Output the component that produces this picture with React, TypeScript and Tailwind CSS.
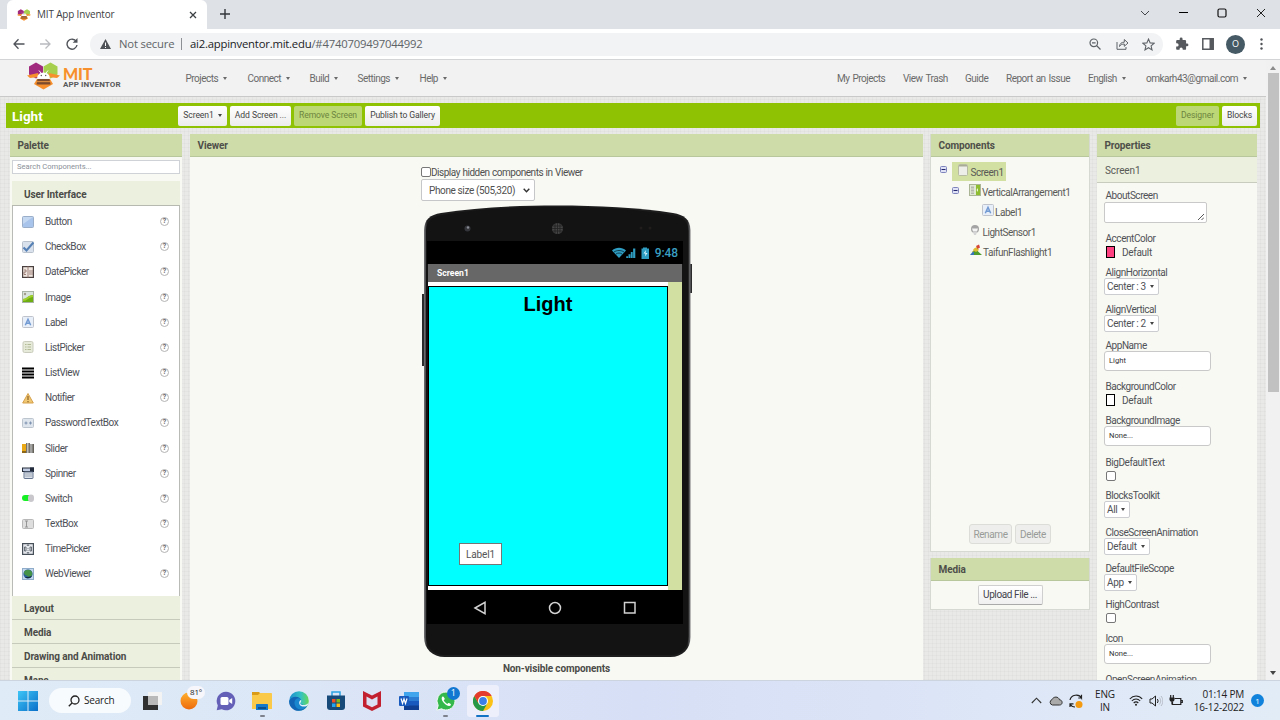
import type { ReactNode } from "react";
import clsx from "clsx";

const palette = [
  "Button",
  "CheckBox",
  "DatePicker",
  "Image",
  "Label",
  "ListPicker",
  "ListView",
  "Notifier",
  "PasswordTextBox",
  "Slider",
  "Spinner",
  "Switch",
  "TextBox",
  "TimePicker",
  "WebViewer",
];

const drawers = ["Layout", "Media", "Drawing and Animation", "Maps"];

const leftMenu = [
  { label: "Projects", width: "w-[62px]" },
  { label: "Connect", width: "w-[62px]" },
  { label: "Build", width: "w-12" },
  { label: "Settings", width: "w-[62px]" },
  { label: "Help", width: "w-12" },
];

const rightMenu = [
  { label: "My Projects", width: "w-[66px]" },
  { label: "View Trash", width: "w-[62px]" },
  { label: "Guide", width: "w-[41px]" },
  { label: "Report an Issue", width: "w-[82px]" },
  { label: "English", width: "w-[58px]", menu: true },
  { label: "omkarh43@gmail.com", width: "w-[120px]", menu: true },
];

type Property = {
  name: string;
  kind: "area" | "color" | "select" | "input" | "check";
  value?: string;
  height: string;
  swatch?: string;
};

const properties: Property[] = [
  { name: "AboutScreen", kind: "area", height: "h-[43px]" },
  { name: "AccentColor", kind: "color", value: "Default", swatch: "bg-[#ff4081]", height: "h-[34px]" },
  { name: "AlignHorizontal", kind: "select", value: "Center : 3", height: "h-[36.5px]" },
  { name: "AlignVertical", kind: "select", value: "Center : 2", height: "h-[36.5px]" },
  { name: "AppName", kind: "input", value: "Light", height: "h-[41px]" },
  { name: "BackgroundColor", kind: "color", value: "Default", swatch: "bg-white", height: "h-[34px]" },
  { name: "BackgroundImage", kind: "input", value: "None...", height: "h-[42px]" },
  { name: "BigDefaultText", kind: "check", height: "h-[33px]" },
  { name: "BlocksToolkit", kind: "select", value: "All", height: "h-[36.5px]" },
  { name: "CloseScreenAnimation", kind: "select", value: "Default", height: "h-9" },
  { name: "DefaultFileScope", kind: "select", value: "App", height: "h-9" },
  { name: "HighContrast", kind: "check", height: "h-[34px]" },
  { name: "Icon", kind: "input", value: "None...", height: "h-[41px]" },
  { name: "OpenScreenAnimation", kind: "select", height: "h-9" },
];

function Caret({ className }: { className?: string }) {
  return (
    <svg viewBox="0 0 4 3" className={clsx("h-[3px] w-1 shrink-0", className)}>
      <path d="M0 0h4L2 3z" fill="currentColor" />
    </svg>
  );
}

function BeeLogo({ className }: { className?: string }) {
  return (
    <svg viewBox="0 0 33 28" className={className}>
      <path d="M2 4.500 9 .5l7 4v8l-7 4-7-4z" fill="#a0287d" />
      <path d="M16.500 4.500 23.500.5l7 4v8l-7 4-7-4z" fill="#a5cf4c" />
      <path d="M0 13.500 11 11l1 4-9 1zM33 13.500 22 11l-1 4 9 1z" fill="#f7902c" />
      <path d="M10 17h13l3 5-9.500 5.500L7 22z" fill="#f7902c" />
      <path d="M10.500 17h12l1 5.500h-14z" fill="#7c4a2d" />
      <path d="M10 19h13v1.200H10z" fill="#d98a3c" />
      <path d="M10.500 16.500c-1-3 2-6 6-6s7 3 6 6z" fill="#fff" />
      <path d="m14 11-2-2.500M19 11l2-2.500" stroke="#fff" strokeWidth="1" />
      <circle cx="14.300" cy="13.500" r=".7" fill="#555" />
      <circle cx="18.700" cy="13.500" r=".7" fill="#555" />
    </svg>
  );
}

function ComponentIcon({ name }: { name: string }) {
  const shapes: Record<string, ReactNode> = {
    Button: (
      <>
        <rect x=".5" y=".5" width="11" height="11" rx="1" fill="#a9c4ea" stroke="#9aaec9" />
        <path d="M1 1h10L1 8z" fill="#c5d8f2" />
      </>
    ),
    CheckBox: (
      <>
        <rect x=".5" y=".5" width="11" height="11" rx="1" fill="#d9e1ec" stroke="#b8c1cc" />
        <path d="m1.500 6.500 3 3 7-8" stroke="#5580b5" strokeWidth="2.200" fill="none" />
      </>
    ),
    DatePicker: (
      <>
        <rect x=".6" y=".6" width="10.800" height="10.800" fill="#f1e6df" stroke="#4a4040" strokeWidth="1.200" />
        <path d="M2 4h2v2H2v2.500h2M6 0v12M8 4v5M10 4v5" stroke="#8a6b62" strokeWidth=".8" fill="none" />
      </>
    ),
    Image: (
      <>
        <rect x=".5" y=".5" width="11" height="11" fill="#dbe5df" stroke="#a9b3a6" />
        <path d="M1 8c4 0 5-4 10-4v7H1z" fill="#6fae10" />
        <path d="M1 8c4 0 5-4 10-4v2C7 6 5 10 1 10z" fill="#9fd02c" />
        <circle cx="3" cy="3" r="1.200" fill="#a39d8b" />
      </>
    ),
    Label: (
      <>
        <rect x=".5" y=".5" width="11" height="11" rx="1" fill="#e9eff8" stroke="#bfc4cc" />
        <path d="m3.300 9.300 2.700-6 2.700 6M4.300 7.200h3.400" stroke="#7199d2" strokeWidth="1.500" fill="none" />
      </>
    ),
    ListPicker: (
      <>
        <rect x="1" y=".5" width="10" height="11" rx="1.500" fill="#e6ead9" stroke="#c9ccbc" />
        <path d="M3 3.500h1.500M3 6h1.500M3 8.500h1.500M5.500 3.500H9M5.500 6H9M5.500 8.500H9" stroke="#adb58e" strokeWidth=".9" />
      </>
    ),
    ListView: <path d="M0 1.500h12M0 4.500h12M0 7.500h12M0 10.500h12" stroke="#000" strokeWidth="1.900" />,
    Notifier: (
      <>
        <path d="M6 1.500 11.300 11H.7z" fill="#f0c773" stroke="#d6a04b" />
        <path d="M6 4v4M6 9v1.300" stroke="#946b2c" strokeWidth="1.300" />
      </>
    ),
    PasswordTextBox: (
      <>
        <rect x=".5" y="1.500" width="11" height="9" rx="1" fill="#dfe5ec" stroke="#bcc4cd" />
        <path d="M2.500 6h3M7 6h3M4 4.500v3M8.500 4.500v3" stroke="#7d92b1" />
      </>
    ),
    Slider: (
      <>
        <path d="M0 2h4v9H0z" fill="#e9a916" />
        <path d="M0 9h4v2H0z" fill="#8d6819" />
        <path d="M4 1h4v10H4z" fill="#77736c" />
        <path d="M5 1h1.500v10H5z" fill="#c1beb7" />
        <path d="M8 2h4v9H8z" fill="#a2a2a0" />
        <path d="M10.500 2H12v9h-1.500z" fill="#65625c" />
      </>
    ),
    Spinner: (
      <>
        <rect x=".5" y="1" width="11" height="3.500" fill="#bfcbe0" stroke="#252d3b" />
        <path d="M8 .5h4V5H8z" fill="#222b3b" />
        <rect x="2" y="5" width="9" height="6.500" rx=".5" fill="#dae1e9" stroke="#65758f" />
        <path d="M3 7h7M3 9h7" stroke="#8b97a8" strokeWidth=".7" />
      </>
    ),
    Switch: (
      <>
        <rect x="0" y="3" width="11" height="6" rx="3" fill="#15ef24" />
        <rect x="6" y="2.500" width="6" height="7.500" rx="3" fill="#c9c7cb" />
      </>
    ),
    TextBox: (
      <>
        <rect x=".5" y="1.500" width="11" height="9" rx="1" fill="#dedede" stroke="#b8b8b8" />
        <path d="M3 3h3M3 9h3M4.500 3v6" stroke="#8d8d8d" strokeWidth=".9" />
      </>
    ),
    TimePicker: (
      <>
        <rect x=".6" y=".6" width="10.800" height="10.800" fill="#e5e8ed" stroke="#474f59" strokeWidth="1.200" />
        <path d="M2.500 4h1.500v4H2.500zM5 3l1-1.500L7 3M5 9l1 1.500L7 9M8 4h1.500v4H8zM6 5v.8M6 7v.8" stroke="#4b535c" strokeWidth=".8" fill="none" />
      </>
    ),
    WebViewer: (
      <>
        <rect x=".5" y=".5" width="11" height="11" fill="#c5d7ee" stroke="#8facca" />
        <circle cx="6" cy="6" r="4.600" fill="#285f96" />
        <path d="M2 4c2-3 6-3 8 0 1 3-1 5-3 5-2-2-5-1-5-5z" fill="#459348" />
        <path d="M3 9c2 2 5 1.500 7-1-3 1-5 1-7 1z" fill="#15293f" />
      </>
    ),
  };

  return (
    <svg viewBox="0 0 12 12" className="h-3 w-3 shrink-0">
      {shapes[name]}
    </svg>
  );
}

function PanelTitle({ children }: { children: ReactNode }) {
  return (
    <div className="flex h-[23px] shrink-0 items-center border-b border-[#b9c79d] bg-[#cddca9] pl-[7.500px] pt-px text-[10px] font-bold tracking-[-0.1px] text-[#4f4f4a]">
      {children}
    </div>
  );
}

function BrowserChrome() {
  return (
    <div className="h-[60px] shrink-0 border-b border-[#d3d4d6] bg-white font-['Open_Sans',sans-serif] text-[#3c4043]">
      <div className="flex h-[29px] bg-[#dee1e6] pl-[7px]">
        <div className="flex w-[200px] items-center rounded-t-[6px] bg-white pl-2.5">
          <BeeLogo className="h-3.5 w-3.5" />
          <span className="ml-1.5 text-[9.900px] tracking-[-0.12px]">MIT App Inventor</span>
          <svg viewBox="0 0 8 8" className="ml-auto mr-2.5 h-2 w-2" stroke="#3c4043" strokeWidth="1.300">
            <path d="m1 1 6 6M7 1 1 7" />
          </svg>
        </div>
        <svg viewBox="0 0 10 10" className="ml-[13px] mt-[9px] h-2.5 w-2.5" stroke="#33363a" strokeWidth="1.400">
          <path d="M5 0v10M0 5h10" />
        </svg>
        <div className="ml-auto mr-[14px] flex items-center pb-1">
          <svg viewBox="0 0 10 6" className="mr-[29px] h-1.5 w-2.5" fill="none" stroke="#44474b">
            <path d="m1 1 4 4 4-4" />
          </svg>
          <span className="mr-[29px] h-px w-[9px] bg-black" />
          <svg viewBox="0 0 10 10" className="mr-[29px] h-2.5 w-2.5" fill="none" stroke="#111" strokeWidth="1.200">
            <rect x="1" y="1" width="8" height="8" rx="1.500" />
          </svg>
          <svg viewBox="0 0 10 10" className="h-2.5 w-2.5" stroke="#222">
            <path d="m1 1 8 8M9 1 1 9" />
          </svg>
        </div>
      </div>
      <div className="flex h-[30px] items-center pl-[13px]">
        <svg viewBox="0 0 12 12" className="h-3 w-3" fill="none" stroke="#50545a" strokeWidth="1.300">
          <path d="M11.500 6H1M5.500 1.200 1 6l4.500 4.800" />
        </svg>
        <svg viewBox="0 0 12 12" className="ml-[14px] h-3 w-3" fill="none" stroke="#b9bbbe" strokeWidth="1.300">
          <path d="M1 6h10M6.500 1.500 11 6l-4.500 4.500" />
        </svg>
        <svg viewBox="0 0 12 12" className="ml-[15px] h-3 w-3" fill="none" stroke="#50545a" strokeWidth="1.400">
          <path d="M10.300 3.500A5 5 0 1 0 11 7" />
          <path d="M11.500 0v4.800H6.700z" fill="#50545a" stroke="none" />
        </svg>
        <div className="ml-3 flex h-[23px] w-[1073px] items-center rounded-full bg-[#f1f3f4] pl-2.5 text-[11.300px]">
          <svg viewBox="0 0 11 10" className="h-2.5 w-[11px]">
            <path d="M5.500 0 11 10H0z" fill="#505357" />
            <path d="M5.500 3.500V7M5.500 8v1" stroke="#fff" />
          </svg>
          <span className="ml-2 w-[55px] whitespace-nowrap tracking-[-0.2px] text-[#5f6368]">Not secure</span>
          <span className="ml-[7px] h-3 w-px bg-[#8d9095]" />
          <span className="ml-2 whitespace-nowrap tracking-[-0.21px] text-[#5f6368]">
            <span className="text-[#202124]">ai2.appinventor.mit.edu</span>/#4740709497044992
          </span>
          <svg viewBox="0 0 12 12" className="ml-auto h-3 w-3" fill="none" stroke="#5f6368" strokeWidth="1.200">
            <circle cx="4.800" cy="4.800" r="3.800" />
            <path d="m7.500 7.500 4 4M3 4.800h3.600" />
          </svg>
          <svg viewBox="0 0 13 12" className="ml-[15px] h-3 w-[13px]" fill="none" stroke="#5f6368">
            <path d="M1 4v7.300h9V9M3.500 8.500c.3-3 2-4.300 4.800-4.300V1.500L12 5 8.300 8.300V6c-2 0-3.500.5-4.800 2.500z" />
          </svg>
          <svg viewBox="0 0 24 24" className="ml-[13px] mr-2 h-[13px] w-[13px]" fill="none" stroke="#5f6368" strokeWidth="2">
            <path d="m12 2 3 7 7.500.6-5.700 5 1.700 7.400-6.500-4-6.500 4 1.700-7.400-5.700-5L9 9z" />
          </svg>
        </div>
        <svg viewBox="0 0 24 24" className="ml-3 h-3.5 w-3.5" fill="#56595e">
          <path d="M20.500 11H19V7a2 2 0 0 0-2-2h-4V3.500a2.500 2.500 0 0 0-5 0V5H4a2 2 0 0 0-2 2v3.800h1.500a2.700 2.700 0 0 1 0 5.400H2V20c0 1.100.9 2 2 2h3.800v-1.500a2.700 2.700 0 0 1 5.400 0V22H17a2 2 0 0 0 2-2v-4h1.500a2.500 2.500 0 0 0 0-5z" />
        </svg>
        <svg viewBox="0 0 12 12" className="ml-[13px] h-3 w-3">
          <path d="M.8.800h10.400v10.400H.8z" fill="none" stroke="#56595e" strokeWidth="1.500" />
          <path d="M7.500 1h4v10h-4z" fill="#56595e" />
        </svg>
        <span className="ml-3 flex h-[19px] w-[19px] items-center justify-center rounded-full bg-[#455a64] text-[9px] text-white">O</span>
        <svg viewBox="0 0 3 12" className="ml-[15px] h-3 w-[3px]" fill="#505357">
          <circle cx="1.500" cy="1.500" r="1.200" />
          <circle cx="1.500" cy="6" r="1.200" />
          <circle cx="1.500" cy="10.500" r="1.200" />
        </svg>
      </div>
    </div>
  );
}

function SiteHeader() {
  return (
    <header className="flex h-[37px] items-center border-b border-[#c9c9c9] bg-[#f2f2f2] pl-[27px] text-[10px] tracking-[-0.5px] text-[#6a6a6a] [word-spacing:1px]">
      <BeeLogo className="mb-1 h-7 w-[33px]" />
      <div className="ml-[3px] w-[122.500px]">
        <div className="font-['Lato',sans-serif] text-[16px] font-black leading-[13px] tracking-[-0.2px] text-[#f7902c]">MIT</div>
        <div className="text-[8px] font-bold leading-[9px] tracking-[0.1px] text-[#58595b] [word-spacing:0px]">APP INVENTOR</div>
      </div>
      {leftMenu.map((item) => (
        <div key={item.label} className={clsx("flex items-center whitespace-nowrap", item.width)}>
          {item.label}
          <Caret className="ml-[5px]" />
        </div>
      ))}
      <div className="ml-auto flex">
        {rightMenu.map((item) => (
          <div key={item.label} className={clsx("flex items-center whitespace-nowrap", item.width)}>
            {item.label}
            {item.menu && <Caret className="ml-[5px]" />}
          </div>
        ))}
      </div>
    </header>
  );
}

function BarButton({ children, width, disabled }: { children: ReactNode; width: string; disabled?: boolean }) {
  return (
    <button
      className={clsx(
        "flex h-5 items-center justify-center whitespace-nowrap rounded-[2px] text-[8.600px] tracking-[-0.1px]",
        width,
        disabled ? "bg-[#bcd876] text-[#6d8540]" : "bg-linear-to-b from-white to-[#ececec] text-[#444]"
      )}
    >
      {children}
    </button>
  );
}

function ProjectBar() {
  return (
    <div className="mx-1.5 mt-1.5 flex h-[25px] items-center gap-[3px] bg-[#8fc202] pl-1.5 pr-[3px]">
      <div className="w-[163px] pt-0.5 text-[13.500px] font-bold text-white">Light</div>
      <BarButton width="w-[49px]">
        Screen1
        <Caret className="ml-1" />
      </BarButton>
      <BarButton width="w-[61px]">Add Screen ...</BarButton>
      <BarButton width="w-[68px]" disabled>
        Remove Screen
      </BarButton>
      <BarButton width="w-[75px]">Publish to Gallery</BarButton>
      <div className="ml-auto flex gap-[3px]">
        <BarButton width="w-[43px]" disabled>
          Designer
        </BarButton>
        <BarButton width="w-[35px]">Blocks</BarButton>
      </div>
    </div>
  );
}

function PalettePanel() {
  return (
    <section className="mr-px flex w-[172px] flex-col bg-[#f8f9f3]">
      <PanelTitle>Palette</PanelTitle>
      <div className="mx-0.5 mt-[3px] flex h-[14px] shrink-0 items-center border border-[#cfd3d8] bg-white pl-1 text-[7.600px] text-[#8b9098]">
        Search Components...
      </div>
      <div className="mx-0.5 mt-[7px] flex h-[25px] shrink-0 items-center border-b border-[#b5b9af] bg-[#ecf1df] pl-3 pt-0.5 text-[10px] font-bold tracking-[-0.1px] text-[#4b4b48]">
        User Interface
      </div>
      <div className="mx-0.5 h-[390px] shrink-0 border-x border-[#b9bbb6] bg-white pl-[9px] pr-2.5 pt-[3px]">
        {palette.map((name) => (
          <div key={name} className="flex h-[25.180px] items-center">
            <ComponentIcon name={name} />
            <span className="ml-[11px] text-[10px] tracking-[-0.45px] text-[#4e5057]">{name}</span>
            <span className="ml-auto flex h-[9px] w-[9px] items-center justify-center rounded-full border border-[#b3b3b3] text-[7px] font-bold leading-none text-[#666]">
              ?
            </span>
          </div>
        ))}
      </div>
      {drawers.map((name) => (
        <div
          key={name}
          className="mx-0.5 flex h-6 shrink-0 items-center border-b border-[#c6cabb] bg-[#ecf1df] pl-3 pt-px text-[10px] font-bold tracking-[-0.1px] text-[#4b4b48]"
        >
          {name}
        </div>
      ))}
    </section>
  );
}

function PhoneFrame() {
  return (
    <svg viewBox="0 0 272 452" className="absolute inset-0 h-full w-full">
      <defs>
        <linearGradient id="edge" x1="0" x2="1">
          <stop offset="0" stopColor="#77787a" />
          <stop offset=".012" stopColor="#1d1d1e" />
          <stop offset=".988" stopColor="#1d1d1e" />
          <stop offset="1" stopColor="#77787a" />
        </linearGradient>
      </defs>
      <path d="M1 89h4v72H1zM268 59h3v29h-3z" fill="#2b2b2c" />
      <path
        d="M3 25C3.500 14 9 10 20 8 55 2.500 95 .5 136 .5s81 2 116 7.500c11 2 17 6 17.500 17v407c0 12-8 20-20 20H23.500c-12 0-20.500-8-20.500-20z"
        fill="url(#edge)"
      />
      <path
        d="M5 26C5.500 16 10 12 21 10 56 4 95 2 136 2s80 2 115 8c11 2 16 6 16.500 16v405c0 12-7.500 19-18.500 19H24c-11 0-19-7-19-19z"
        fill="#131313"
      />
      <circle cx="46.500" cy="23.500" r="3" fill="#34363c" />
      <circle cx="47" cy="22.500" r="1.200" fill="#898b94" />
      <circle cx="136.500" cy="23.500" r="5.500" fill="#454545" />
      <path d="M132 21h9M131 23.500h11M132 26h9M134 18.500v10M136.500 18v11M139 18.500v10" stroke="#222" strokeWidth=".8" />
      <circle cx="220" cy="23" r="1.500" fill="#221d1d" />
      <circle cx="229" cy="23" r="1.500" fill="#221d1d" />
    </svg>
  );
}

function Phone() {
  return (
    <div className="relative mt-1 h-[452px] w-[272px]">
      <PhoneFrame />
      <div className="relative pl-1.5 pr-[10px] pt-9">
        <div className="flex h-[23px] items-center bg-black pr-[5px] text-[#3a9fc2]">
          <svg viewBox="0 0 38 12" className="ml-auto mr-[5px] h-3 w-[38px]" fill="#2f9dc2">
            <path d="M0 3.500C4-.2 10-.2 14 3.500L7 11z" />
            <path d="M2 5c3-2 7-2 10 0M4 7c2-1.300 4-1.300 6 0" stroke="#0b3443" strokeWidth=".9" fill="none" />
            <path d="M13.500 11V9.300h1.900V11zM15.800 11V7.300h1.900V11zM18.100 11V5h1.900v6zM20.400 11V1.500h2.200V11z" transform="translate(.7)" />
            <path d="M29.500 1.500H31V.5h4v1h2V12h-7.500z" />
            <path d="m34 3-2.500 3.500h2L33 9.500 35.500 6h-2z" fill="#d8f6ff" />
          </svg>
          <span className="text-[12px] font-medium leading-none tracking-[-0.1px]">9:48</span>
        </div>
        <div className="mx-px flex h-[18px] items-center bg-[#676767] pl-[9px] text-[8.600px] font-bold text-white">Screen1</div>
        <div className="mx-px flex h-[308px] bg-white">
          <div className="mb-1 mt-1 w-60 border-[1.500px] border-black bg-[#00ffff] pt-[5px]">
            <div className="text-center font-['Liberation_Sans',sans-serif] text-[20px] font-bold leading-6 text-black">Light</div>
            <div className="ml-[30px] mt-[227px] flex h-[22px] w-[43px] items-center justify-center border border-[#767676] bg-white text-[10px] tracking-[-0.1px] text-[#555]">
              Label1
            </div>
          </div>
          <div className="flex-1 bg-[#d2e0a2]" />
        </div>
        <div className="flex h-[34px] items-center bg-black">
          <svg viewBox="0 0 256 34" className="h-full w-full" fill="none" stroke="#d2d2d2" strokeWidth="1.500">
            <path d="M48 18l10-5.700v11.400z" />
            <circle cx="128" cy="18" r="5.500" />
            <rect x="197.500" y="12.500" width="10.500" height="10.500" />
          </svg>
        </div>
      </div>
    </div>
  );
}

function ViewerPanel() {
  return (
    <section className="flex w-[733px] flex-col bg-[#f8f9f3]">
      <PanelTitle>Viewer</PanelTitle>
      <div className="ml-[231px] mt-[9px] text-[10px] text-[#505050]">
        <div className="flex h-[13px] items-center">
          <span className="mb-0.5 h-2.5 w-2.5 rounded-[2px] border border-[#777] bg-white" />
          <span className="tracking-[-0.48px] [word-spacing:0.5px]">Display hidden components in Viewer</span>
        </div>
        <div className="flex h-[22px] w-[114px] items-center rounded-[2px] border border-[#c5c7c8] bg-white pl-[7px] text-[10px] tracking-[-0.38px]">
          Phone size (505,320)
          <svg viewBox="0 0 7 5" className="ml-auto mr-1 h-[5px] w-[7px]" fill="none" stroke="#333" strokeWidth="1.400">
            <path d="m.7.700 2.800 3 2.800-3" />
          </svg>
        </div>
        <Phone />
        <div className="mt-1 w-[271px] text-center text-[10px] font-bold tracking-[-0.12px] text-[#4b4b48]">Non-visible components</div>
      </div>
    </section>
  );
}

function TreeToggle() {
  return (
    <svg viewBox="0 0 7 7" className="mb-1 h-[7px] w-[7px] shrink-0">
      <rect x=".5" y=".5" width="6" height="6" rx="1" fill="#dfe2f5" stroke="#7f84bd" />
      <path d="M1.500 3.500h4" stroke="#25286c" />
    </svg>
  );
}

function ComponentTree() {
  return (
    <div className="pt-[5px] text-[10px] tracking-[-0.45px] text-[#5a5a57]">
      <div className="flex h-[19px] items-center pl-[9px]">
        <TreeToggle />
        <div className="ml-[5px] flex h-[19px] w-[54px] items-center bg-[#d2e0a2] pl-1.5">
          <svg viewBox="0 0 10 12" className="mb-1 h-3 w-2.5 shrink-0">
            <rect x=".5" y=".5" width="9" height="11" rx="1" fill="#eceee7" stroke="#b6bba2" />
            <path d="M1 1h8v1.500H1z" fill="#a9ad98" />
          </svg>
          <span className="ml-[2.500px] pt-px">Screen1</span>
        </div>
      </div>
      <div className="mt-px flex h-5 items-center pl-[21px]">
        <TreeToggle />
        <svg viewBox="0 0 12 12" className="mb-1 ml-[10px] h-3 w-3 shrink-0">
          <rect x=".5" y=".5" width="11" height="11" fill="#e0e7d2" stroke="#aab595" />
          <path d="M7 1h4v10H7z" fill="#8ebd31" />
          <path d="M2 2.500h3v2H2zM2 5.500h3v2H2zM2 8.500h3v1.500H2z" fill="#b5b9ae" />
          <path d="m9 4-1.500 2L9 8" fill="#eef5da" />
        </svg>
        <span className="ml-px pt-px">VerticalArrangement1</span>
      </div>
      <div className="flex h-5 items-center pl-[51px]">
        <span className="mb-1 flex">
          <ComponentIcon name="Label" />
        </span>
        <span className="ml-px pt-px">Label1</span>
      </div>
      <div className="flex h-5 items-center pl-[39px]">
        <svg viewBox="0 0 10 12" className="mb-1 h-3 w-2.5 shrink-0">
          <circle cx="5" cy="5" r="4" fill="#a4a4a4" />
          <path d="M2 4.500h6L7 7.500H3z" fill="#f4f4f4" />
          <path d="M3 8h4l-1 3H4z" fill="#d5d5d5" />
        </svg>
        <span className="ml-[2.500px] pt-px">LightSensor1</span>
      </div>
      <div className="flex h-5 items-center pl-[39px]">
        <svg viewBox="0 0 12 12" className="mb-1 h-3 w-3 shrink-0">
          <path d="M0 11 2.500 8h4v3z" fill="#3974b9" />
          <path d="m2 8 3-3 3 3z" fill="#8e9d2e" />
          <path d="M4 11V7.500l3-1 5 4.500z" fill="#4f9c2f" />
          <path d="M3 6 4 4.500 7 3l2 3-3 2z" fill="#dfbc32" />
          <path d="M6 2 9 .5 10 3.500 7.500 5z" fill="#d64636" />
        </svg>
        <span className="ml-px pt-px">TaifunFlashlight1</span>
      </div>
    </div>
  );
}

function ComponentsColumn() {
  return (
    <div className="flex w-[160px] flex-col">
      <section className="flex h-[418px] flex-col border border-t-0 border-[#d6d8d2] bg-[#f8f9f3]">
        <PanelTitle>Components</PanelTitle>
        <ComponentTree />
        <div className="mb-[7px] mt-auto flex justify-center gap-[3px] text-[10px] tracking-[-0.4px] text-[#999b98]">
          <button className="h-5 w-[43px] rounded-[3px] border border-[#dcddd8] bg-[#eeefec]">Rename</button>
          <button className="h-5 w-9 rounded-[3px] border border-[#dcddd8] bg-[#eeefec]">Delete</button>
        </div>
      </section>
      <section className="mt-1.5 h-[52px] border border-t-0 border-[#d6d8d2] bg-[#f8f9f3]">
        <PanelTitle>Media</PanelTitle>
        <button className="mx-auto mt-1 block h-5 w-[65px] rounded-[2px] border border-[#cfcfcf] border-b-[#aaa] bg-linear-to-b from-white to-[#f0f0f0] text-[10px] leading-none tracking-[-0.4px] text-[#44444c]">
          Upload File ...
        </button>
      </section>
    </div>
  );
}

function PropertyEditor({ property }: { property: Property }) {
  switch (property.kind) {
    case "area":
      return (
        <div className="flex h-[21px] w-[103px] items-end justify-end rounded-[2px] border border-[#c9c9c9] bg-white p-0.5">
          <svg viewBox="0 0 6 6" className="h-1.5 w-1.5" stroke="#444" strokeWidth=".9">
            <path d="M0 6 6 0M3.500 6 6 3.500" />
          </svg>
        </div>
      );
    case "color":
      return (
        <div className="flex h-3.5 items-center pl-0.5">
          <span className={clsx("h-3 w-[9px] border border-black", property.swatch)} />
          <span className="ml-[7px] tracking-[-0.3px]">{property.value}</span>
        </div>
      );
    case "select":
      if (!property.value) return null;
      return (
        <div className="-mt-px inline-flex h-[17px] items-center whitespace-nowrap rounded-[2px] border border-[#cbcdd0] bg-white pl-0.5 pr-1 tracking-[-0.35px]">
          {property.value}
          <Caret className="ml-1 text-[#444]" />
        </div>
      );
    case "input":
      return (
        <div className="-mt-px flex h-5 w-[107px] items-center rounded-[3px] border border-[#c9c9c9] bg-white pl-1 text-[7.600px] tracking-normal text-[#333]">
          {property.value}
        </div>
      );
    case "check":
      return <div className="ml-0.5 mt-0.5 h-2.5 w-2.5 rounded-[2px] border border-[#777] bg-white" />;
  }
}

function PropertiesPanel() {
  return (
    <section className="flex w-[160px] flex-col bg-[#f8f9f3]">
      <PanelTitle>Properties</PanelTitle>
      <div className="flex h-[26px] shrink-0 items-center border-b border-[#c8ccbe] bg-[#ecf1df] pl-[8px] pt-px text-[10px] tracking-[-0.1px] text-[#5a5a57]">
        Screen1
      </div>
      <div className="pl-[7px] pt-[5px] text-[10px] tracking-[-0.45px] text-[#505257]">
        {properties.map((property) => (
          <div key={property.name} className={clsx("flex flex-col items-start", property.height)}>
            <div className="h-[14px] shrink-0 pl-[1.500px] leading-4">{property.name}</div>
            <PropertyEditor property={property} />
          </div>
        ))}
      </div>
    </section>
  );
}

function Scrollbar() {
  return (
    <div className="flex w-[14px] shrink-0 flex-col items-center bg-[#f1f1f1] text-[#555]">
      <svg viewBox="0 0 6 4" className="mt-1.5 h-1 w-1.5" fill="#8a8a8a">
        <path d="M3 0l3 4H0z" />
      </svg>
      <div className="mt-[3px] h-[319px] w-[11px] bg-[#c1c1c1]" />
      <svg viewBox="0 0 6 4" className="mb-[5px] mt-auto h-1 w-1.5" fill="#444">
        <path d="M0 0h6L3 4z" />
      </svg>
    </div>
  );
}

function WordIcon() {
  return (
    <svg viewBox="0 0 20 20" className="h-5 w-5">
      <rect x="5" y="1" width="15" height="18" rx="1" fill="#2b7cd3" />
      <path d="M5 1h15v5H5z" fill="#41a5ee" />
      <path d="M5 10h15v5H5z" fill="#185abd" />
      <path d="M5 14.500h15V19H5z" fill="#103f91" />
      <rect y="5" width="10" height="10" rx="1" fill="#185abd" />
      <path d="m2 7.500 1.500 5L5 8l1.500 4.500 1.500-5" stroke="#fff" strokeWidth="1.200" fill="none" />
    </svg>
  );
}

function Taskbar() {
  const apps: { name: string; icon: ReactNode; open?: boolean; active?: boolean }[] = [
    {
      name: "Task view",
      icon: (
        <svg viewBox="0 0 20 20" className="h-5 w-5">
          <path d="M1 5h15v14H1z" fill="#303030" />
          <path d="M6 1h14v13H6z" fill="#f3f3f3" />
          <path d="M6 5h10v9H6z" fill="#b9b9b9" />
        </svg>
      ),
    },
    {
      name: "Weather",
      icon: (
        <span className="relative">
          <svg viewBox="0 0 18 18" className="h-[18px] w-[18px]">
            <defs>
              <linearGradient id="sun" x2="0" y2="1">
                <stop stopColor="#ffb02e" />
                <stop offset="1" stopColor="#ed6a0c" />
              </linearGradient>
            </defs>
            <circle cx="9" cy="9" r="8.500" fill="url(#sun)" />
          </svg>
          <span className="absolute -top-[6px] left-[7px] flex h-[13px] w-[18px] items-center justify-center rounded-full bg-[#f6f6fb] text-[8px] tracking-[-0.2px] text-[#222]">
            81°
          </span>
        </span>
      ),
    },
    {
      name: "Chat",
      icon: (
        <svg viewBox="0 0 20 20" className="h-5 w-5">
          <path d="M10 .7a9.300 9.300 0 1 1-4.200 17.600L.7 19.300l1.100-4.800A9.300 9.300 0 0 1 10 .7z" fill="#6460b8" />
          <rect x="4.500" y="6" width="8" height="8" rx="1.500" fill="#fff" />
          <path d="m13.200 9 3-2v6l-3-2z" fill="#fff" />
        </svg>
      ),
    },
    {
      name: "Explorer",
      open: true,
      icon: (
        <svg viewBox="0 0 20 18" className="h-[18px] w-5">
          <path d="M0 0h7l2 2h-1l-2 3H0z" fill="#d99b18" />
          <path d="M0 3h6l2-2h11c.6 0 1 .4 1 1v15H0z" fill="#fbc94a" />
          <path d="M4 13c0-.6.400-1 1-1h10c.6 0 1 .4 1 1v5H4z" fill="#1679c9" />
          <path d="M6 15h8v2H6z" fill="#0c4f8c" />
        </svg>
      ),
    },
    {
      name: "Edge",
      icon: (
        <svg viewBox="0 0 20 20" className="h-5 w-5">
          <defs>
            <linearGradient id="edgeTop">
              <stop stopColor="#1c8ed0" />
              <stop offset=".6" stopColor="#35c1c1" />
              <stop offset="1" stopColor="#67d957" />
            </linearGradient>
          </defs>
          <circle cx="10" cy="10" r="9.800" fill="url(#edgeTop)" />
          <path d="M.2 10C2 5 10 4 12 9c-4-1-5 5 0 6 3 .7 5 0 6.500-.8C16.500 18 13.500 19.800 10 19.800 4 19.800-.2 15 .2 10z" fill="#1265b4" />
          <path d="M5.500 12C5 8 10 5.500 12 9c-1.500 1.500-2 4 2 4.500-3 3-1 3 4 1-3 6-12 5-12.500-2.500z" fill="#1a86cd" />
          <path d="M12 9c1 2-2 3 0 4.500 2 1 5.500.8 7.300-1.500-.3 2-.7 2.800-2 3.200-3 1-6.300 0-7-2.200C9.800 11 10.500 9.500 12 9z" fill="#e3f1fb" />
        </svg>
      ),
    },
    {
      name: "Store",
      icon: (
        <svg viewBox="0 0 20 20" className="h-5 w-5">
          <path d="M6 5V1h8v4" fill="none" stroke="#2aa2e2" strokeWidth="1.500" />
          <path d="M1 4.500h18V16c0 2-1 3-3 3H4c-2 0-3-1-3-3z" fill="#174a78" />
          <path d="M6 8h3.500v3.500H6z" fill="#f04e23" />
          <path d="M10.500 8H14v3.500h-3.500z" fill="#7fba1c" />
          <path d="M6 12.500h3.500V16H6z" fill="#22a5ee" />
          <path d="M10.500 12.500H14V16h-3.500z" fill="#ffbb12" />
        </svg>
      ),
    },
    {
      name: "McAfee",
      icon: (
        <svg viewBox="0 0 18 20" className="h-5 w-[18px]">
          <path d="m0 0 9 4.500L18 0v15.500L9 20l-9-4.500z" fill="#c2202f" />
          <path d="m3.500 5.500 5.500 3 5.500-3v8L9 16.200l-5.500-2.700z" fill="#dbe0f2" />
        </svg>
      ),
    },
    { name: "Word", icon: <WordIcon /> },
    {
      name: "WhatsApp",
      open: true,
      icon: (
        <span className="relative">
          <svg viewBox="0 0 20 20" className="h-5 w-5">
            <path d="M10 1a9 9 0 1 1-4.500 16.800L.8 19.200l1.400-4.700A9 9 0 0 1 10 1z" fill="#35b84b" stroke="#f4fbf5" />
            <path d="M6.500 5.500c-2 2 0 5 2 7s5 3.500 6.500 1.500c.5-1-2-2.500-2.700-2l-1 1C10 12.500 8 10.500 7.700 9.300l1-1C9 7.500 7.500 5 6.500 5.500z" fill="#fff" />
          </svg>
          <span className="absolute -top-1 left-[11px] flex h-[13px] w-[13px] items-center justify-center rounded-full bg-[#1177d1] text-[9px] text-white">1</span>
        </span>
      ),
    },
    {
      name: "Chrome",
      active: true,
      icon: (
        <svg viewBox="0 0 20 20" className="h-5 w-5">
          <circle cx="10" cy="10" r="10" fill="#fbc116" />
          <path d="M1.300 5A10 10 0 0 0 10 20l4.300-7.500L10 10l-4.300 2.500z" fill="#279847" />
          <path d="M1.300 5A10 10 0 0 1 18.700 5H10a5 5 0 0 0-4.300 7.500z" fill="#e33b2e" />
          <circle cx="10" cy="10" r="5" fill="#fff" />
          <circle cx="10" cy="10" r="3.900" fill="#3d7fe8" />
        </svg>
      ),
    },
  ];

  return (
    <footer className="flex h-10 shrink-0 items-center border-t border-[#ccd4df] bg-linear-to-r from-[#dfecf7] via-[#d7dff6] to-[#e2ecf7] pl-[18px] pr-[16px] font-['Open_Sans',sans-serif] text-[#222]">
      <svg viewBox="0 0 20 20" className="h-5 w-5">
        <defs>
          <linearGradient id="win" x2="1" y2="1">
            <stop stopColor="#3dc5f6" />
            <stop offset="1" stopColor="#0a6fc9" />
          </linearGradient>
        </defs>
        <path d="M0 0h9.500v9.500H0zM10.500 0H20v9.500h-9.500zM0 10.500h9.500V20H0zM10.500 10.500H20V20h-9.500z" fill="url(#win)" />
      </svg>
      <div className="ml-[11px] flex h-[25px] w-[82px] items-center rounded-full bg-[#f8fbfe] pl-[19px] text-[10px] tracking-[-0.2px]">
        <svg viewBox="0 0 12 12" className="mr-1 h-3 w-3" fill="none" stroke="#222" strokeWidth="1.300">
          <circle cx="7" cy="5" r="4" />
          <path d="M4 8 .8 11.200" />
        </svg>
        Search
      </div>
      <div className="ml-[3px] flex">
        {apps.map((app) => (
          <div key={app.name} className="flex w-[36.700px] justify-center">
            <div
              className={clsx(
                "relative flex h-8 w-8 items-center justify-center rounded-[3px]",
                app.active && "bg-[#edf0fb]"
              )}
            >
              {app.icon}
              {app.open && <span className="absolute bottom-0 h-0.5 w-[5px] rounded-full bg-[#7d828c]" />}
              {app.active && <span className="absolute bottom-0 h-0.5 w-[13px] rounded-full bg-[#1272c4]" />}
            </div>
          </div>
        ))}
      </div>
      <div className="ml-auto flex items-center text-[10px] leading-[13px] tracking-[-0.2px]">
        <svg viewBox="0 0 11 7" className="h-[7px] w-[11px]" fill="none" stroke="#333" strokeWidth="1.100">
          <path d="m.8 6 4.700-4.800L10.200 6" />
        </svg>
        <svg viewBox="0 0 14 10" className="ml-[7px] h-2.5 w-3.5">
          <path d="M3.500 9A2.800 2.800 0 0 1 3 3.600C4.500.2 9.500.2 10.500 3.800c3.500.2 3.500 5.200 0 5.200z" fill="#aaa" stroke="#333" />
        </svg>
        <svg viewBox="0 0 14 14" className="ml-[6px] h-3.5 w-3.5" fill="none" stroke="#222" strokeWidth="1.200">
          <path d="M1 6c1-5.500 9-6.500 11.500-2V.8M12.500 4H9.300M1 13v-3.200h3.500M1 10c1 1.800 2.800 3 5 3" />
          <circle cx="10" cy="10.500" r="3.500" fill="#f39a10" stroke="none" />
        </svg>
        <div className="ml-3 w-5 text-center">
          ENG
          <br />
          IN
        </div>
        <svg viewBox="0 0 14 11" className="ml-[14px] h-[11px] w-3.5" fill="none" stroke="#222" strokeWidth="1.100">
          <path d="M.8 4c3.500-4 9-4 12.400 0M2.800 6c2.500-2.700 6-2.700 8.400 0M4.700 8c1.500-1.500 3.200-1.500 4.600 0" />
          <circle cx="7" cy="9.700" r="1" fill="#222" stroke="none" />
        </svg>
        <svg viewBox="0 0 14 12" className="ml-[6px] h-3 w-3.5" fill="none" stroke="#222">
          <path d="M1 4h2l3.500-3v10L3 8H1zM8.300 4c1 1.300 1 2.700 0 4" />
          <path d="M10.200 2.500c2 2.300 2 4.700 0 7M12 1c2.500 3.300 2.500 6.700 0 10" stroke="#b5bbc4" />
        </svg>
        <svg viewBox="0 0 14 12" className="ml-[6px] h-3 w-3.5" fill="none" stroke="#222" strokeWidth="1.200">
          <path d="M5.500 3.500h6.300v6H3.500V7M12 5.500h1.300v2H12" />
          <path d="M.5 2.500h5v2.300a2.500 2 0 0 1-5 0z" fill="#222" stroke="none" />
          <path d="M1.700 0v3M4.300 0v3M3 6v3.500" />
        </svg>
        <div className="ml-[11px] w-[50px] whitespace-nowrap text-right">
          <div>01:14 PM</div>
          <div className="-ml-1">16-12-2022</div>
        </div>
        <span className="ml-[7px] flex h-[13px] w-[13px] items-center justify-center rounded-full bg-[#1182dc] text-[8px] text-white">1</span>
      </div>
    </footer>
  );
}

export default function App() {
  return (
    <div className="flex h-[720px] w-[1280px] flex-col overflow-hidden bg-white font-['Roboto',sans-serif]">
      <BrowserChrome />
      <div className="flex h-[620px] min-h-0 shrink-0 overflow-hidden">
        <div className="w-[1266px] bg-[#e9e9e8] bg-[repeating-linear-gradient(90deg,#00000006_0px,#00000006_1px,transparent_1px,transparent_4px),repeating-linear-gradient(0deg,#00000006_0px,#00000006_1px,transparent_1px,transparent_4px)]">
          <SiteHeader />
          <ProjectBar />
          <main className="mt-1.5 flex h-[560px] gap-[7px] pl-[10px]">
            <PalettePanel />
            <ViewerPanel />
            <ComponentsColumn />
            <PropertiesPanel />
          </main>
        </div>
        <Scrollbar />
      </div>
      <Taskbar />
    </div>
  );
}
